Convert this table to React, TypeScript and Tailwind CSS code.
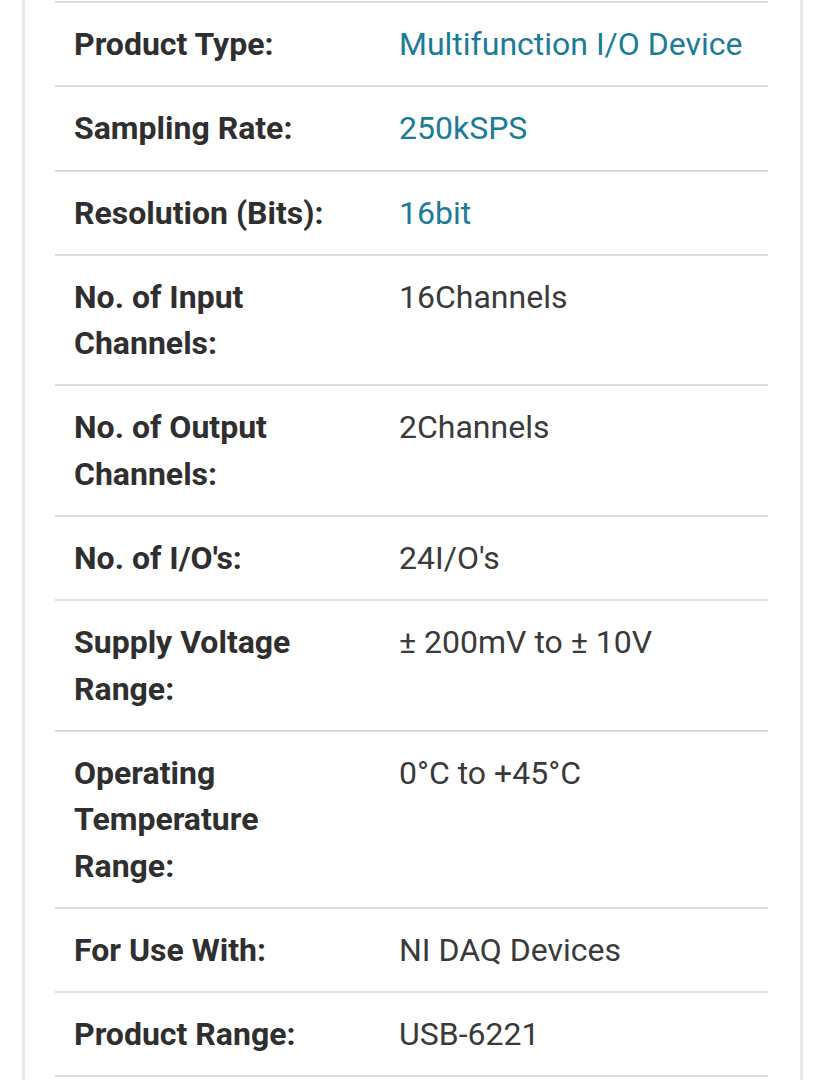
import React from 'react'

interface SpecRow {
  label: string
  value: string
  link?: boolean
}

const SPECS: SpecRow[] = [
  { label: 'Product Type:', value: 'Multifunction I/O Device', link: true },
  { label: 'Sampling Rate:', value: '250kSPS', link: true },
  { label: 'Resolution (Bits):', value: '16bit', link: true },
  { label: 'No. of Input Channels:', value: '16Channels' },
  { label: 'No. of Output Channels:', value: '2Channels' },
  { label: "No. of I/O's:", value: "24I/O's" },
  { label: 'Supply Voltage Range:', value: '± 200mV to ± 10V' },
  { label: 'Operating Temperature Range:', value: '0°C to +45°C' },
  { label: 'For Use With:', value: 'NI DAQ Devices' },
  { label: 'Product Range:', value: 'USB-6221' },
]

export default function App() {
  return (
    <div className="min-h-[1080px] bg-white" style={{ fontFamily: 'Roboto, "Noto Sans", sans-serif' }}>
      <div className="ml-[22px] w-[781px] min-h-[1080px] border-x-[3px] border-[#e8e8e8] pl-[30px] pr-[32px] pt-[1px]">
        <div className="border-t-2 border-[#dedede]">
          {SPECS.map(row => (
            <div key={row.label} className="grid grid-cols-[344px_1fr] border-b-2 border-[#dedede]">
              <div className="pl-[19px] pr-[55px] py-[18px] text-[32px] leading-[46.3px] font-bold text-[#2f2f2f]">
                {row.label}
              </div>
              <div
                className={`py-[18px] text-[32px] leading-[46.3px] ${
                  row.link ? 'text-[#1b7b99]' : 'text-[#3a3a3a]'
                }`}
              >
                {row.value}
              </div>
            </div>
          ))}
        </div>
      </div>
    </div>
  )
}
